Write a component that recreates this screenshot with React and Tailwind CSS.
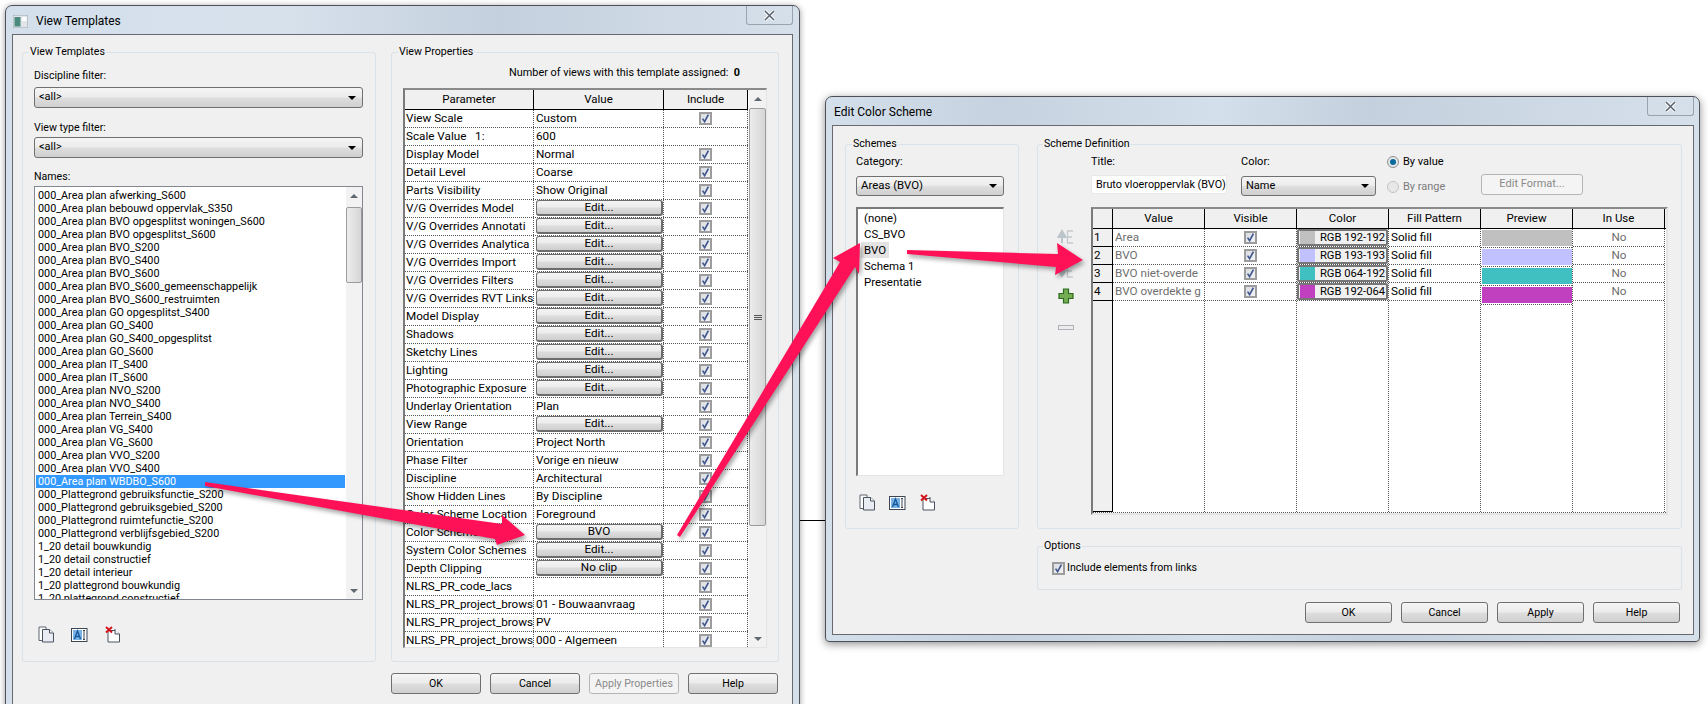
import React from 'react';

const names = [
  '000_Area plan afwerking_S600',
  '000_Area plan bebouwd oppervlak_S350',
  '000_Area plan BVO opgesplitst woningen_S600',
  '000_Area plan BVO opgesplitst_S600',
  '000_Area plan BVO_S200',
  '000_Area plan BVO_S400',
  '000_Area plan BVO_S600',
  '000_Area plan BVO_S600_gemeenschappelijk',
  '000_Area plan BVO_S600_restruimten',
  '000_Area plan GO opgesplitst_S400',
  '000_Area plan GO_S400',
  '000_Area plan GO_S400_opgesplitst',
  '000_Area plan GO_S600',
  '000_Area plan IT_S400',
  '000_Area plan IT_S600',
  '000_Area plan NVO_S200',
  '000_Area plan NVO_S400',
  '000_Area plan Terrein_S400',
  '000_Area plan VG_S400',
  '000_Area plan VG_S600',
  '000_Area plan VVO_S200',
  '000_Area plan VVO_S400',
  '000_Area plan WBDBO_S600',
  '000_Plattegrond gebruiksfunctie_S200',
  '000_Plattegrond gebruiksgebied_S200',
  '000_Plattegrond ruimtefunctie_S200',
  '000_Plattegrond verblijfsgebied_S200',
  '1_20 detail bouwkundig',
  '1_20 detail constructief',
  '1_20 detail interieur',
  '1_20 plattegrond bouwkundig',
  '1_20 plattegrond constructief',
];

const params = [
  ['View Scale', 'Custom'],
  ['Scale Value   1:', '600', 'text', false],
  ['Display Model', 'Normal'],
  ['Detail Level', 'Coarse'],
  ['Parts Visibility', 'Show Original'],
  ['V/G Overrides Model', 'Edit...', 'btn'],
  ['V/G Overrides Annotati', 'Edit...', 'btn'],
  ['V/G Overrides Analytica', 'Edit...', 'btn'],
  ['V/G Overrides Import', 'Edit...', 'btn'],
  ['V/G Overrides Filters', 'Edit...', 'btn'],
  ['V/G Overrides RVT Links', 'Edit...', 'btn'],
  ['Model Display', 'Edit...', 'btn'],
  ['Shadows', 'Edit...', 'btn'],
  ['Sketchy Lines', 'Edit...', 'btn'],
  ['Lighting', 'Edit...', 'btn'],
  ['Photographic Exposure', 'Edit...', 'btn'],
  ['Underlay Orientation', 'Plan'],
  ['View Range', 'Edit...', 'btn'],
  ['Orientation', 'Project North'],
  ['Phase Filter', 'Vorige en nieuw'],
  ['Discipline', 'Architectural'],
  ['Show Hidden Lines', 'By Discipline'],
  ['Color Scheme Location', 'Foreground'],
  ['Color Scheme', 'BVO', 'btn'],
  ['System Color Schemes', 'Edit...', 'btn'],
  ['Depth Clipping', 'No clip', 'btn'],
  ['NLRS_PR_code_lacs', ''],
  ['NLRS_PR_project_brows', '01 - Bouwaanvraag'],
  ['NLRS_PR_project_brows', 'PV'],
  ['NLRS_PR_project_brows', '000 - Algemeen'],
];

const schemeRows = [
  { n: 1, value: 'Area', rgb: 'RGB 192-192', swatch: 'bg-[#c0c0c0]' },
  { n: 2, value: 'BVO', rgb: 'RGB 193-193', swatch: 'bg-[#c1c1ff]' },
  { n: 3, value: 'BVO niet-overde', rgb: 'RGB 064-192', swatch: 'bg-[#40c0c0]' },
  { n: 4, value: 'BVO overdekte g', rgb: 'RGB 192-064', swatch: 'bg-[#c040c0]' },
];

const btnFill = 'bg-[linear-gradient(180deg,#f5f5f5_0%,#ececec_46%,#dddddd_54%,#cfcfcf_100%)]';

const Check = () => (
  <span className="flex h-[13px] w-[13px] items-center justify-center border-2 border-[#9c9c9c] bg-[linear-gradient(135deg,#d8dce2,#f4f4f6)]">
    <svg width="9" height="9" viewBox="0 0 9 9">
      <path d="M1.6 4.6 L3.6 7.6 L7.4 0.6" fill="none" stroke="#42588f" strokeWidth="1.7" />
    </svg>
  </span>
);

const CloseBtn = () => (
  <div className="flex h-[19px] w-[47px] items-center justify-center rounded-b-[3px] border border-t-0 border-[#98a3ae]">
    <svg width="13" height="11" viewBox="0 0 13 11">
      <path d="M2 1 L11 10 M11 1 L2 10" stroke="#fff" strokeWidth="3.4" />
      <path d="M2 1 L11 10 M11 1 L2 10" stroke="#5b6470" strokeWidth="1.6" />
    </svg>
  </div>
);

const Group = ({ title, className, legendClass, children }) => (
  <fieldset className={`rounded-[3px] border border-[#d9e2e8] ${className}`}>
    <legend className={`px-px leading-[14px] ${legendClass}`}>{title}</legend>
    {children}
  </fieldset>
);

const Select = ({ value, className }) => (
  <div className={`flex items-center justify-between rounded-[3px] border border-[#707070] pl-[4px] pr-[6px] ${btnFill} ${className}`}>
    <span>{value}</span>
    <span className="h-0 w-0 border-x-[4px] border-t-[4px] border-x-transparent border-t-black" />
  </div>
);

const DlgButton = ({ label, className = '', disabled }) => (
  <div
    className={`flex h-[21px] items-center justify-center rounded-[3px] border ${
      disabled ? 'border-[#b5b5b5] bg-[#f4f4f4] text-[#8a8a8a]' : `border-[#707070] ${btnFill}`
    } ${className}`}
  >
    {label}
  </div>
);

const ArrowGlyph = ({ up }) => (
  <span
    className={`h-0 w-0 border-x-[4px] border-x-transparent ${
      up ? 'border-b-[4px] border-b-[#5f6771]' : 'border-t-[4px] border-t-[#5f6771]'
    }`}
  />
);

const Scrollbar = ({ className, thumbTop, thumbHeight, grip, upHeight }) => (
  <div className={`flex flex-col bg-[#f2f2f2] ${className}`}>
    <div className="flex items-center justify-center" style={{ height: upHeight }}>
      <ArrowGlyph up />
    </div>
    <div
      className="flex shrink-0 items-center justify-center rounded-[2px] border border-[#9c9c9c] bg-[linear-gradient(90deg,#ececec,#d6d6d6)]"
      style={{ marginTop: thumbTop, height: thumbHeight }}
    >
      {grip && (
        <div className="flex w-[8px] flex-col gap-px">
          <span className="h-px bg-[#555]" />
          <span className="h-px bg-[#555]" />
          <span className="h-px bg-[#555]" />
        </div>
      )}
    </div>
    <div className="flex-1" />
    <div className="flex h-[17px] shrink-0 items-center justify-center">
      <ArrowGlyph />
    </div>
  </div>
);

const CopyIcon = () => (
  <svg width="17" height="17" viewBox="0 0 17 17">
    <path d="M5 14.5 H1 V1 H8 V3" fill="#fff" stroke="#5f6670" />
    <path d="M4.5 3.5 H11.5 L15.5 7 V16 H4.5 Z" fill="#e9edf3" stroke="#4a5260" />
    <path d="M11.5 3.5 V7 H15.5" fill="#fff" stroke="#4a5260" />
  </svg>
);

const RenameIcon = () => (
  <svg width="17" height="15" viewBox="0 0 17 15">
    <rect x="0.5" y="0.5" width="15.5" height="13" fill="#fff" stroke="#3d4754" />
    <rect x="2" y="2" width="9" height="10" fill="#7ab4e6" />
    <path d="M3.5 11 L6.5 3 L9.5 11 M4.6 8.5 H8.4" fill="none" stroke="#175a9c" strokeWidth="1.4" />
    <path d="M12 2.5 H14 M13 2.5 V11.5 M12 11.5 H14" stroke="#3d4754" />
  </svg>
);

const DeleteIcon = () => (
  <svg width="16" height="17" viewBox="0 0 16 17">
    <path d="M3 4.5 H10 L14.5 8 V16 H3 Z" fill="#fff" stroke="#4a5260" />
    <path d="M10 3 V8 H14.5" fill="#eef0f3" stroke="#4a5260" />
    <path d="M1 1 L7 6.5 M7 1 L1 6.5" stroke="#d2141c" strokeWidth="2" />
  </svg>
);

const MoveIcon = ({ down }) => (
  <svg width="18" height="16" viewBox="0 0 18 16">
    <path
      d={down ? 'M5 1 V9 M1.5 8 L5 13 L8.5 8 Z' : 'M5 14 V7 M1.5 8 L5 2 L8.5 8 Z'}
      fill="#bcc5ca"
      stroke="#bcc5ca"
      strokeWidth="2"
    />
    <path d="M16 2 H10.5 V14 H16 M10.5 8 H15" fill="none" stroke="#c4c9cd" strokeWidth="1.3" />
  </svg>
);

const IconRow = ({ gaps }) => (
  <div className="flex items-end">
    <span style={{ marginLeft: gaps[0] }}><CopyIcon /></span>
    <span style={{ marginLeft: gaps[1] }}><RenameIcon /></span>
    <span style={{ marginLeft: gaps[2] }}><DeleteIcon /></span>
  </div>
);

const ViewTemplates = () => (
  <div className="absolute left-[5px] top-[5px] h-[730px] w-[795px] rounded-t-[7px] border border-[#4d5157] bg-[linear-gradient(90deg,#d3dfeb,#d6e1ec_35%,#c4d0dd_62%,#d5e0eb)] px-[6px] shadow-[0_1px_6px_rgba(0,0,0,0.4)]">
    <div className="flex h-[28px] items-start justify-between">
      <div className="flex items-center gap-[8px] pl-[1px] pt-[7px]">
        <svg width="15" height="13" viewBox="0 0 15 13">
          <rect x="0" y="0" width="15" height="13" fill="#dfe5ea" stroke="#9aa3aa" />
          <rect x="1.5" y="2" width="6" height="9.5" fill="#4d8a7e" />
          <rect x="9" y="2" width="4.5" height="4" fill="#fff" />
        </svg>
        <span className="text-[12px] leading-[16px]">View Templates</span>
      </div>
      <CloseBtn />
    </div>
    <div className="h-[700px] border border-[#666a70] bg-[#f0f0f0] pl-[9px] pt-[10px]">
      <div className="flex gap-[15px]">
        <Group title="View Templates" className="h-[617px] w-[354px] pl-[11px]" legendClass="-ml-[5px]">
          <div className="mt-[10px] leading-[14px]">Discipline filter:</div>
          <Select value="<all>" className="mt-[4px] h-[21px] w-[329px] text-[11px]" />
          <div className="mt-[13px] leading-[14px]">View type filter:</div>
          <Select value="<all>" className="mt-[2px] h-[21px] w-[329px] text-[11px]" />
          <div className="mt-[12px] leading-[14px]">Names:</div>
          <div className="mt-[2px] flex h-[414px] w-[329px] border border-[#828790] bg-white text-[10.8px]">
            <div className="h-full w-[310px] overflow-hidden pl-px pt-[2px]">
              {names.map((name) => (
                <div
                  key={name}
                  className={`h-[13px] whitespace-pre pl-[2px] leading-[13px] ${
                    name.includes('WBDBO') ? 'bg-[#3399ff] text-white' : ''
                  }`}
                >
                  {name}
                </div>
              ))}
            </div>
            <Scrollbar className="ml-px w-[16px]" upHeight={17} thumbTop={3} thumbHeight={76} />
          </div>
          <div className="mt-[26px]">
            <IconRow gaps={[4, 16, 17]} />
          </div>
        </Group>

        <Group title="View Properties" className="h-[617px] w-[388px] pl-[11px]" legendClass="-ml-[5px]">
          <div className="mt-[7px] w-[337px] text-right text-[10.85px] leading-[14px]">
            Number of views with this template assigned:&nbsp;&nbsp;<b>0</b>
          </div>
          <div className="mt-[8px] flex h-[560px] w-[364px] overflow-hidden border-b border-l-2 border-r border-t-2 border-b-[#e4e4e4] border-l-[#7a7a7a] border-r-[#e4e4e4] border-t-[#8a8a8a] bg-white text-[11.7px]">
            <div className="w-[343px]">
              <div className="flex h-[20px] border-b border-black bg-[#f0f0f0] text-[11.5px]">
                <div className="flex w-[129px] items-center justify-center border-r border-black">Parameter</div>
                <div className="flex w-[130px] items-center justify-center border-r border-black">Value</div>
                <div className="flex w-[84px] items-center justify-center border-r border-black">Include</div>
              </div>
              {params.map(([label, value, kind, hasCheck], i) => (
                <div key={label + i} className="flex h-[18px] border-b border-dotted border-b-[#555]">
                  <div className="w-[129px] overflow-hidden whitespace-pre border-r border-dotted border-r-[#555] pl-[1px] leading-[17px]">
                    {label}
                  </div>
                  <div className="w-[130px] overflow-hidden whitespace-pre border-r border-dotted border-r-[#555] pl-[2px] leading-[17px]">
                    {kind === 'btn' ? (
                      <div className={`flex h-[16px] w-[127px] items-center justify-center rounded-[3px] border border-b-2 border-r-2 border-[#6c6c6c] leading-none ${btnFill}`}>
                        {value}
                      </div>
                    ) : (
                      value
                    )}
                  </div>
                  <div className="flex w-[84px] items-center justify-center border-r border-dotted border-r-[#555]">
                    {hasCheck !== false && <Check />}
                  </div>
                </div>
              ))}
            </div>
            <Scrollbar className="ml-px w-[17px]" upHeight={17} thumbTop={1} thumbHeight={418} grip />
          </div>
        </Group>
      </div>
      <div className="ml-[369px] mt-[11px] flex gap-[9px]">
        <DlgButton label="OK" className="w-[90px]" />
        <DlgButton label="Cancel" className="w-[90px]" />
        <DlgButton label="Apply Properties" className="w-[90px]" disabled />
        <DlgButton label="Help" className="w-[90px]" />
      </div>
    </div>
  </div>
);

const EditColorScheme = () => (
  <div className="absolute left-[825px] top-[96px] h-[546px] w-[875px] rounded-b-[4px] rounded-t-[7px] border border-[#4d5157] bg-[linear-gradient(90deg,#d3dfeb,#c6d2df_20%,#d3dfea_45%,#c4d0dd_62%,#d5e0eb)] pl-[6px] pr-[5px] shadow-[0_2px_8px_rgba(0,0,0,0.45)]">
    <div className="flex h-[28px] items-start justify-between">
      <span className="pl-[2px] pt-[7px] text-[12px] leading-[16px]">Edit Color Scheme</span>
      <CloseBtn />
    </div>
    <div className="h-[510px] border border-[#666a70] bg-[#f0f0f0] pl-[12px] pt-[11px]">
      <div className="flex gap-[18px]">
        <Group title="Schemes" className="h-[392px] w-[174px] pl-[10px]" legendClass="-ml-[4px]">
          <div className="mt-[4px] text-[11px] leading-[14px]">Category:</div>
          <Select value="Areas (BVO)" className="mt-[7px] h-[20px] w-[148px] text-[11.4px]" />
          <div className="mt-[11px] h-[269px] w-[148px] border-b border-l-2 border-r border-t-2 border-b-[#e4e4e4] border-l-[#7a7a7a] border-r-[#e4e4e4] border-t-[#7a7a7a] bg-white pl-[3px] pt-[1px] text-[11.4px] leading-[16px]">
            <div className="pl-[3px]">(none)</div>
            <div className="pl-[3px]">CS_BVO</div>
            <div><span className="inline-block h-[16px] bg-[#e3e3e3] px-[3px]">BVO</span></div>
            <div className="pl-[3px]">Schema 1</div>
            <div className="pl-[3px]">Presentatie</div>
          </div>
          <div className="mt-[18px]">
            <IconRow gaps={[3, 13, 14]} />
          </div>
        </Group>

        <Group title="Scheme Definition" className="h-[392px] w-[645px] pl-[53px]" legendClass="-ml-[48px]">
          <div className="mt-[4px] flex h-[41px] text-[11px]">
            <div className="w-[136px]">
              <div className="leading-[14px]">Title:</div>
              <div className="mt-[6px] h-[19px] overflow-hidden whitespace-pre rounded-[2px] border border-[#e8e8e8] bg-white pl-[4px] text-[10.8px] leading-[17px]">
                Bruto vloeroppervlak (BVO)
              </div>
            </div>
            <div className="ml-[14px] w-[135px]">
              <div className="leading-[14px]">Color:</div>
              <Select value="Name" className="mt-[7px] h-[20px]" />
            </div>
            <div className="ml-[11px] w-[94px]">
              <div className="flex h-[14px] items-center gap-[4px]">
                <span className="flex h-[12px] w-[12px] items-center justify-center rounded-full border border-[#8b8f93] bg-[#e6e6e6]">
                  <span className="h-[6px] w-[6px] rounded-full bg-[#0a6a9c]" />
                </span>
                By value
              </div>
              <div className="mt-[11px] flex h-[14px] items-center gap-[4px] text-[#7c7c7c]">
                <span className="h-[12px] w-[12px] rounded-full border border-[#c4c4c4] bg-[#e8e8e8]" />
                By range
              </div>
            </div>
            <DlgButton label="Edit Format..." className="mt-[19px] w-[102px]" disabled />
          </div>
          <div className="-ml-[53px] mt-[11px] flex">
            <div className="flex w-[53px] flex-col items-center pl-[2px]">
              <div className="mt-[22px]"><MoveIcon /></div>
              <div className="mt-[18px]"><MoveIcon down /></div>
              <svg className="mt-[9px]" width="16" height="16" viewBox="0 0 16 16">
                <path
                  d="M5.5 1 H10.5 V5.5 H15 V10.5 H10.5 V15 H5.5 V10.5 H1 V5.5 H5.5 Z"
                  fill="#74ad52"
                  stroke="#2d6b1c"
                  strokeWidth="1.2"
                />
              </svg>
              <div className="mt-[21px] h-[5px] w-[16px] border border-[#adb3b8] bg-[#ececec]" />
            </div>
            <div className="h-[308px] w-[577px] border-2 border-b-[#e4e4e4] border-l-[#7a7a7a] border-r-[#e4e4e4] border-t-[#8a8a8a] bg-white text-[11.7px]">
              <div className="flex h-[20px] border-b border-black bg-[#f0f0f0] text-[11.5px]">
                <div className="w-[20px] border-r border-black" />
                {['Value', 'Visible', 'Color', 'Fill Pattern', 'Preview', 'In Use'].map((h) => (
                  <div key={h} className="flex w-[92px] items-center justify-center border-r border-black">
                    {h}
                  </div>
                ))}
              </div>
              <div className="flex h-[284px] border-b border-dotted border-b-[#555]">
                <div className="h-full w-[20px] border-b border-r border-black bg-[#f0f0f0]">
                  {schemeRows.map((r) => (
                    <div key={r.n} className="-mr-px h-[18px] border-b border-r border-black pl-[1px] leading-[17px]">
                      {r.n}
                    </div>
                  ))}
                </div>
                <div className="flex h-full w-[552px]">
                  {[0, 1, 2, 3, 4, 5].map((c) => (
                    <div key={c} className="h-full w-[92px] border-r border-dotted border-r-[#555]">
                      {schemeRows.map((r) => (
                        <div key={r.n} className="h-[18px] border-b border-dotted border-b-[#555]">
                          {c === 0 && <div className="overflow-hidden whitespace-pre pl-[2px] leading-[17px] text-[#6e6e6e]">{r.value}</div>}
                          {c === 1 && <div className="flex h-full items-center justify-center"><Check /></div>}
                          {c === 2 && (
                            <div className="flex h-[17px] items-center justify-between rounded-[2px] border-2 border-[#777] bg-[#f0f0f0] pl-px pr-[1px] text-[11.2px]">
                              <span className={`h-[13px] w-[15px] ${r.swatch}`} />
                              <span className="leading-none">{r.rgb}</span>
                            </div>
                          )}
                          {c === 3 && <div className="pl-[2px] leading-[17px]">Solid fill</div>}
                          {c === 4 && <div className={`ml-px mt-[1px] h-[16px] w-[90px] ${r.swatch}`} />}
                          {c === 5 && <div className="pl-px text-center leading-[17px] text-[#6e6e6e]">No</div>}
                        </div>
                      ))}
                    </div>
                  ))}
                </div>
              </div>
            </div>
          </div>
        </Group>
      </div>
      <div className="ml-[192px] mt-[10px]">
        <Group title="Options" className="h-[51px] w-[645px] pl-[14px]" legendClass="-ml-[9px]">
          <div className="mt-[9px] flex h-[13px] items-center gap-[2px]">
            <Check />
            <span className="leading-none">Include elements from links</span>
          </div>
        </Group>
      </div>
      <div className="ml-[460px] mt-[12px] flex gap-[9px]">
        <DlgButton label="OK" className="w-[87px]" />
        <DlgButton label="Cancel" className="w-[87px]" />
        <DlgButton label="Apply" className="w-[87px]" />
        <DlgButton label="Help" className="w-[87px]" />
      </div>
    </div>
  </div>
);

// pink callout arrows drawn over both dialogs
const Arrows = () => (
  <svg className="pointer-events-none absolute left-0 top-0 drop-shadow-[2px_3px_2px_rgba(0,0,0,0.35)]" width="1708" height="704" viewBox="0 0 1708 704">
    <g fill="#ff1158">
      <path d="M205 482 L502 524 L502 515 L525 535 L497 545 L495 539 L205 486 Z" />
      <path d="M677 535 L840 262 L833 258 L860 243 L859 274 L855 267 L680 537 Z" />
      <path d="M907 250 L1058 254 L1057 243 L1083 260 L1055 275 L1056 267 L907 254 Z" />
    </g>
  </svg>
);

const App = () => (
  <div className="relative h-[704px] w-[1708px] overflow-hidden bg-white font-['Roboto',sans-serif] text-[10.6px] text-black">
    <div className="absolute left-[800px] top-[520px] h-px w-[26px] bg-black" />
    <ViewTemplates />
    <EditColorScheme />
    <Arrows />
  </div>
);

export default App;
